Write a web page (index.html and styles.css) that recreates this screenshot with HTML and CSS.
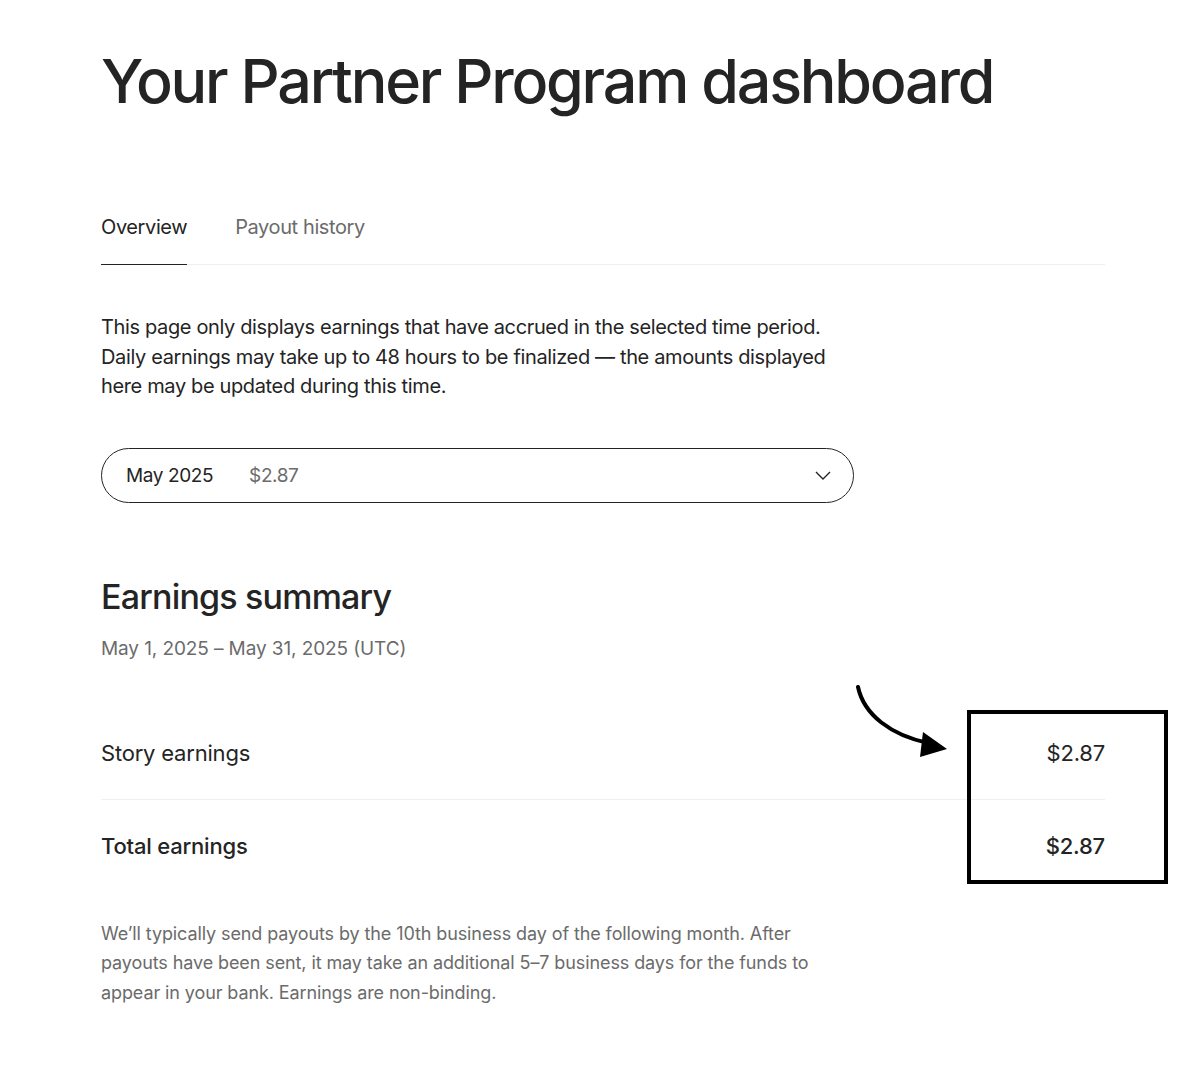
FILE: index.html
```html
<!DOCTYPE html>
<html lang="en">
<head>
<meta charset="utf-8">
<title>Your Partner Program dashboard</title>
<link rel="stylesheet" href="styles.css">
</head>
<body>
<main class="page">
  <h1 class="title">Your Partner Program dashboard</h1>

  <nav class="tabs">
    <a class="tab tab-active">Overview</a>
    <a class="tab">Payout history</a>
  </nav>

  <p class="intro">This page only displays earnings that have accrued in the selected time period.<br>Daily earnings may take up to 48 hours to be finalized — the amounts displayed<br>here may be updated during this time.</p>

  <div class="period-select">
    <span class="period-month">May 2025</span>
    <span class="period-amount">$2.87</span>
    <svg class="chevron" width="16" height="9" viewBox="0 0 16 9" aria-hidden="true">
      <path d="M1 1l7 7 7-7" fill="none" stroke="#242424" stroke-width="1.4"/>
    </svg>
  </div>

  <h2 class="summary-title">Earnings summary</h2>
  <p class="summary-range">May 1, 2025 – May 31, 2025 (UTC)</p>

  <section class="earnings">
    <div class="row">
      <span class="row-label">Story earnings</span>
      <span class="row-value">$2.87</span>
    </div>
    <div class="row row-total">
      <span class="row-label">Total earnings</span>
      <span class="row-value">$2.87</span>
    </div>

    <svg class="callout-arrow" width="100" height="76" viewBox="0 0 100 76" aria-hidden="true">
      <path d="M2 2 C 8 30, 35 50, 72 58" fill="none" stroke="#000" stroke-width="4" stroke-linecap="round"/>
      <path d="M91 64 L67 47 L64 72 Z" fill="#000"/>
    </svg>
    <div class="callout-box"></div>
  </section>

  <p class="footnote">We’ll typically send payouts by the 10th business day of the following month. After<br>payouts have been sent, it may take an additional 5–7 business days for the funds to<br>appear in your bank. Earnings are non-binding.</p>
</main>
</body>
</html>
```

FILE: styles.css
```css
html, body {
  margin: 0;
  padding: 0;
  background: #fff;
}

body {
  font-family: Inter, "Liberation Sans", sans-serif;
  color: #242424;
}

.page {
  width: 1004px;
  padding: 41px 0 60px 101px;
}

.title {
  margin: 0;
  font-size: 61px;
  font-weight: 500;
  letter-spacing: -2.2px;
  line-height: 80px;
  color: #242424;
}

.tabs {
  display: flex;
  gap: 48px;
  margin-top: 94px;
  border-bottom: 1px solid #f0f0f0;
}

.tab {
  display: block;
  padding-bottom: 25px;
  font-size: 20px;
  line-height: 24px;
  color: #6b6b6b;
  letter-spacing: -0.4px;
}

.tab-active {
  color: #242424;
  border-bottom: 1px solid #242424;
  margin-bottom: -1px;
}

.intro {
  margin: 48px 0 0;
  font-size: 20px;
  line-height: 29.5px;
  letter-spacing: -0.36px;
  color: #242424;
}

.period-select {
  display: flex;
  align-items: center;
  box-sizing: border-box;
  width: 753px;
  height: 55px;
  margin-top: 46px;
  padding: 0 22px 0 24px;
  border: 1px solid #242424;
  border-radius: 28px;
  font-size: 19px;
  letter-spacing: -0.4px;
}

.period-month {
  color: #242424;
}

.period-amount {
  margin-left: 36px;
  color: #6b6b6b;
}

.chevron {
  margin-left: auto;
}

.summary-title {
  margin: 72px 0 0;
  font-size: 34px;
  font-weight: 500;
  line-height: 44px;
  letter-spacing: -0.8px;
}

.summary-range {
  margin: 17px 0 0;
  font-size: 19px;
  line-height: 26px;
  color: #6b6b6b;
  letter-spacing: -0.1px;
}

.earnings {
  position: relative;
  margin-top: 45px;
}

.row {
  display: flex;
  justify-content: space-between;
  align-items: center;
  height: 92px;
  font-size: 22px;
  letter-spacing: -0.2px;
}

.row + .row {
  border-top: 1px solid #f0f0f0;
}

.row-total {
  font-weight: 500;
}

.callout-box {
  position: absolute;
  left: 866px;
  top: 3px;
  width: 201px;
  height: 174px;
  box-sizing: border-box;
  border: 4px solid #000;
}

.callout-arrow {
  position: absolute;
  left: 755px;
  top: -22px;
}

.footnote {
  margin: 27px 0 0;
  font-size: 18px;
  line-height: 29.5px;
  letter-spacing: -0.1px;
  color: #6b6b6b;
}
```
